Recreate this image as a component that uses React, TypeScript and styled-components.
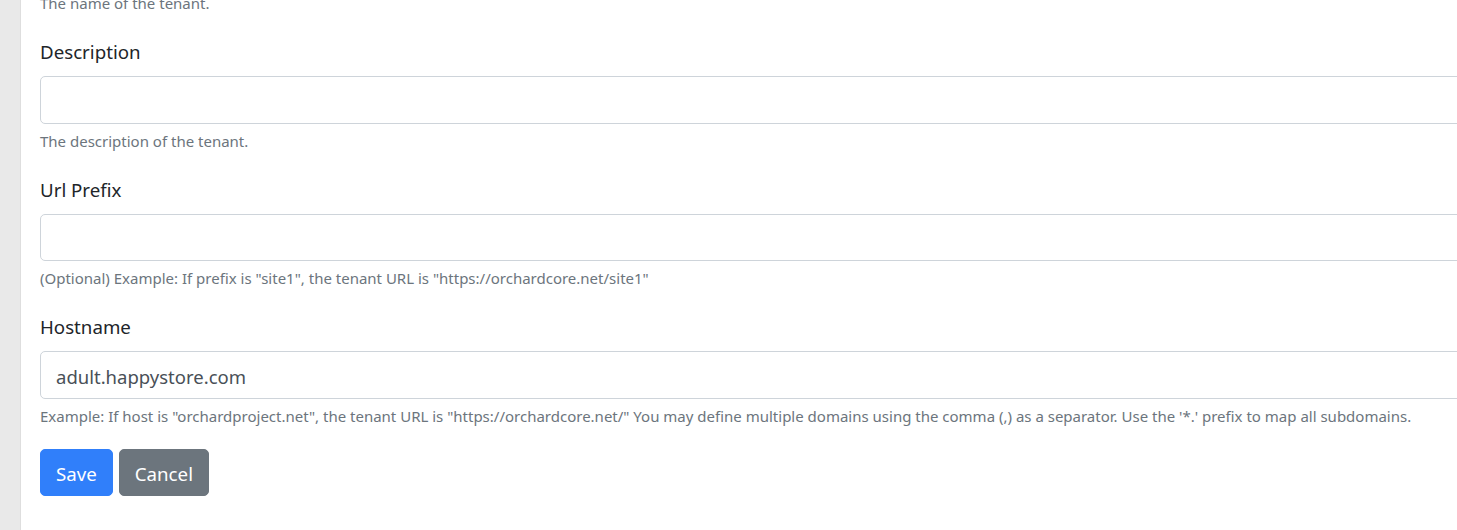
import React from "react";
import styled, { createGlobalStyle } from "styled-components";

const Global = createGlobalStyle`
  html, body { margin: 0; padding: 0; background: #fff; }
  body {
    font-family: "Noto Sans", "Open Sans", Arial, sans-serif;
    color: #212529;
    overflow: hidden;
  }
  * { box-sizing: border-box; }
`;

const Page = styled.div`
  display: flex;
  height: 530px;
  overflow: hidden;
`;

const Sidebar = styled.div`
  flex: 0 0 21px;
  background: #e9e9e9;
  border-right: 1px solid #dedede;
`;

const Main = styled.main`
  flex: 1;
  min-width: 0;
  padding-left: 19px;
  margin-right: -40px;
`;

const Form = styled.form`
  margin-top: -9px;
  display: flex;
  flex-direction: column;
`;

const Group = styled.div`
  margin-bottom: 21px;
`;

const Label = styled.label`
  display: block;
  font-size: 18.7px;
  line-height: 30px;
  padding-top: 1px;
  margin-bottom: 9px;
  color: #212529;
`;

const Input = styled.input`
  display: block;
  width: 100%;
  height: 47.5px;
  padding: 9px 15px 6px;
  font-family: inherit;
  font-size: 18.5px;
  line-height: 30px;
  color: #495057;
  background: #fff;
  border: 1px solid #ced4da;
  border-radius: 5px;
  outline: none;
`;

const Hint = styled.small<{ $first?: boolean }>`
  display: block;
  margin-top: ${(p) => (p.$first ? "0" : "5px")};
  font-size: 15px;
  line-height: 24px;
  color: #6c757d;
  white-space: nowrap;
`;

const Actions = styled.div`
  display: flex;
  gap: 6px;
`;

const Button = styled.button<{ $variant: "primary" | "secondary" }>`
  height: 47.5px;
  padding: 9px 15px 6px;
  font-family: inherit;
  font-size: 18.7px;
  line-height: 30px;
  color: #fff;
  border: 1px solid transparent;
  border-radius: 5px;
  background: ${(p) => (p.$variant === "primary" ? "#307ffa" : "#6c757d")};
  border-color: ${(p) => (p.$variant === "primary" ? "#307ffa" : "#6c757d")};
  cursor: pointer;
`;

export default function App() {
  return (
    <>
      <Global />
      <Page>
        <Sidebar />
        <Main>
          <Form onSubmit={(e) => e.preventDefault()}>
            <Group>
              <Hint $first>The name of the tenant.</Hint>
            </Group>
            <Group>
              <Label>Description</Label>
              <Input type="text" defaultValue="" />
              <Hint>The description of the tenant.</Hint>
            </Group>
            <Group>
              <Label>Url Prefix</Label>
              <Input type="text" defaultValue="" />
              <Hint>(Optional) Example: If prefix is "site1", the tenant URL is "https://orchardcore.net/site1"</Hint>
            </Group>
            <Group>
              <Label>Hostname</Label>
              <Input type="text" defaultValue="adult.happystore.com" />
              <Hint>
                Example: If host is "orchardproject.net", the tenant URL is "https://orchardcore.net/" You may define multiple domains using the comma (,) as a separator. Use the '*.' prefix to map all subdomains.
              </Hint>
            </Group>
            <Actions>
              <Button type="submit" $variant="primary">Save</Button>
              <Button type="button" $variant="secondary">Cancel</Button>
            </Actions>
          </Form>
        </Main>
      </Page>
    </>
  );
}
